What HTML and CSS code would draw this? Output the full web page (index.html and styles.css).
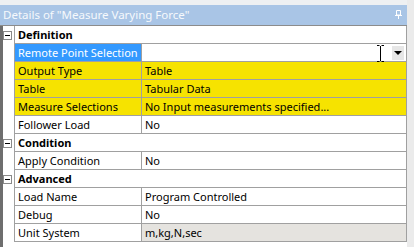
FILE: index.html
```html
<!DOCTYPE html>
<html>
<head>
    <meta charset="utf-8">
    <link rel="stylesheet" href="styles.css">
</head>
<body>
    <div class="panel">
        <div class="top-strip"></div>
        <div class="title-bar">
            <span class="title-text">Details of "Measure Varying Force"</span>
            <svg class="pin" width="9" height="9" viewBox="0 0 9 9">
                <path d="M2.5 0.5 H6.5 V5 H2.5 Z M1 5.5 H8 M4.5 5.5 V9" fill="none" stroke="#fff" stroke-width="1"/>
            </svg>
        </div>
        <div class="sheet">
            <div class="gutter"></div>
            <div class="rows">
                <div class="row">
                    <div class="tog"><span class="box"></span></div>
                    <div class="cells group">Definition</div>
                </div>
                <div class="row">
                    <div class="tog"></div>
                    <div class="cells">
                        <div class="label selected">Remote Point Selection</div>
                        <div class="value combo">
                            <span class="drop"></span>
                        </div>
                    </div>
                </div>
                <div class="row">
                    <div class="tog"></div>
                    <div class="cells">
                        <div class="label hl">Output Type</div>
                        <div class="value hl">Table</div>
                    </div>
                </div>
                <div class="row">
                    <div class="tog"></div>
                    <div class="cells">
                        <div class="label hl">Table</div>
                        <div class="value hl">Tabular Data</div>
                    </div>
                </div>
                <div class="row">
                    <div class="tog"></div>
                    <div class="cells">
                        <div class="label hl">Measure Selections</div>
                        <div class="value hl">No Input measurements specified...</div>
                    </div>
                </div>
                <div class="row">
                    <div class="tog"></div>
                    <div class="cells">
                        <div class="label">Follower Load</div>
                        <div class="value">No</div>
                    </div>
                </div>
                <div class="row">
                    <div class="tog"><span class="box"></span></div>
                    <div class="cells group">Condition</div>
                </div>
                <div class="row">
                    <div class="tog"></div>
                    <div class="cells">
                        <div class="label">Apply Condition</div>
                        <div class="value">No</div>
                    </div>
                </div>
                <div class="row">
                    <div class="tog"><span class="box"></span></div>
                    <div class="cells group">Advanced</div>
                </div>
                <div class="row">
                    <div class="tog"></div>
                    <div class="cells">
                        <div class="label">Load Name</div>
                        <div class="value">Program Controlled</div>
                    </div>
                </div>
                <div class="row">
                    <div class="tog"></div>
                    <div class="cells">
                        <div class="label">Debug</div>
                        <div class="value">No</div>
                    </div>
                </div>
                <div class="row">
                    <div class="tog"></div>
                    <div class="cells">
                        <div class="label">Unit System</div>
                        <div class="value readonly">m,kg,N,sec</div>
                    </div>
                </div>
            </div>
        </div>
        <svg class="ibeam" width="7" height="17" viewBox="0 0 7 17">
            <path d="M0 0.5 H2.5 M4.5 0.5 H7 M3.5 1 V16 M0 16.5 H2.5 M4.5 16.5 H7" fill="none" stroke="#000" stroke-width="1"/>
        </svg>
    </div>
    <div class="edge"></div>
</body>
</html>
```

FILE: styles.css
```css
body {
    margin: 0;
    width: 414px;
    height: 247px;
    display: flex;
    overflow: hidden;
    background: #fff;
    font-family: "Noto Sans", "DejaVu Sans", sans-serif;
    font-size: 11px;
    color: #000;
}

.panel {
    position: relative;
    width: 407px;
    display: flex;
    flex-direction: column;
}

.edge {
    flex: 1;
    background: #ebebeb;
}

.top-strip {
    height: 5px;
    background: #eef0f2;
}

.title-bar {
    height: 20px;
    background: #a9c5e6;
    display: flex;
    align-items: center;
    justify-content: space-between;
    padding: 0 4px 0 3px;
}

.title-text {
    color: #f6f9fc;
    font-size: 11.5px;
    line-height: 20px;
}

.pin {
    margin-top: -2px;
}

.sheet {
    flex: 1;
    display: flex;
    border-top: 1px solid #8c8c8c;
}

.gutter {
    width: 3px;
    background: #6e6e6e;
}

.rows {
    flex: 1;
}

.row {
    display: flex;
    height: 18px;
}

.tog {
    width: 11px;
    display: flex;
    align-items: center;
}

.box {
    position: relative;
    width: 7px;
    height: 7px;
    border: 1px solid #8a8a8a;
    background: #fff;
}

.box:after {
    content: "";
    position: absolute;
    left: 1px;
    top: 3px;
    width: 5px;
    height: 1px;
    background: #000;
}

.cells {
    flex: 1;
    display: grid;
    grid-template-columns: 127px 1fr;
    border-left: 1px solid #a0a0a0;
    border-right: 1px solid #a0a0a0;
    border-bottom: 1px solid #a0a0a0;
}

.group {
    display: block;
    font-weight: bold;
    padding-left: 3px;
    line-height: 17px;
}

.label {
    padding-left: 3px;
    line-height: 17px;
    border-right: 1px solid #a0a0a0;
    white-space: nowrap;
    overflow: hidden;
}

.value {
    padding-left: 3px;
    line-height: 17px;
    white-space: nowrap;
    overflow: hidden;
}

.selected {
    background: #3399ff;
    color: #fff;
}

.hl {
    background: #f6e300;
}

.readonly {
    background: #e5e3df;
}

.combo {
    display: flex;
    justify-content: flex-end;
    align-items: center;
    padding-right: 2px;
}

.drop {
    position: relative;
    width: 12px;
    height: 14px;
    background: #e6e6e6;
}

.drop:after {
    content: "";
    position: absolute;
    left: 2px;
    top: 5px;
    border-left: 4px solid transparent;
    border-right: 4px solid transparent;
    border-top: 4px solid #000;
}

.ibeam {
    position: absolute;
    left: 377px;
    top: 45px;
}
```
